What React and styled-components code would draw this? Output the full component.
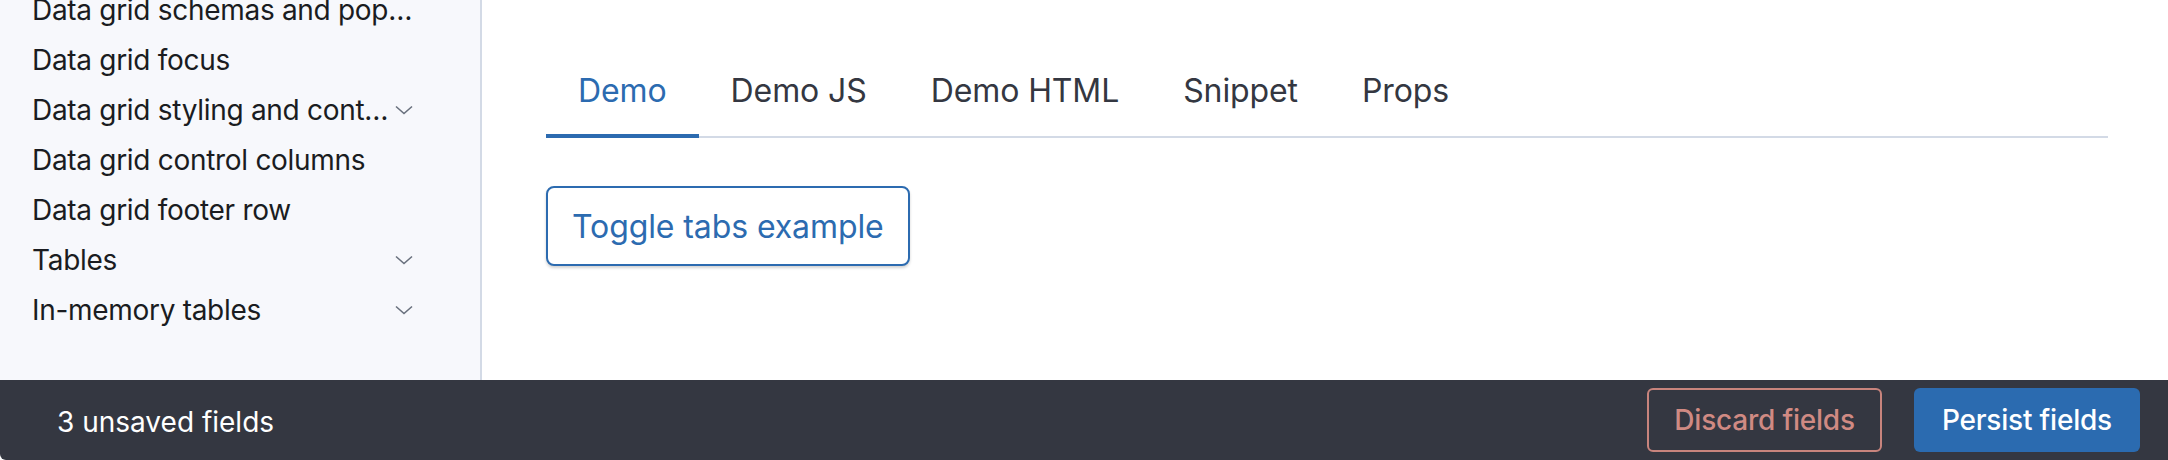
import React from "react";
import styled, { createGlobalStyle } from "styled-components";

const Global = createGlobalStyle`
  html, body { margin: 0; padding: 0; background: #ffffff; }
  body { font-family: Inter, "Noto Sans", sans-serif; -webkit-font-smoothing: antialiased; }
  * { box-sizing: border-box; }
`;

const Page = styled.div`
  width: 2168px;
  height: 460px;
  display: flex;
  flex-direction: column;
  overflow: hidden;
`;

const Body = styled.div`
  flex: 1;
  display: flex;
  min-height: 0;
`;

const Sidebar = styled.nav`
  width: 482px;
  flex: none;
  background: #f7f8fc;
  border-right: 2px solid #d3dae6;
  padding-left: 32px;
  overflow: hidden;
`;

const NavList = styled.ul`
  list-style: none;
  margin: -15px 0 0 0;
  padding: 0;
  width: 382px;
`;

const NavItem = styled.li`
  height: 50px;
  display: flex;
  align-items: center;
  gap: 3px;
  font-size: 28px;
  letter-spacing: -0.3px;
  color: #1a1c21;
`;

const NavLabel = styled.span`
  flex: 1;
  min-width: 0;
  white-space: nowrap;
  overflow: hidden;
  text-overflow: ellipsis;
`;

const Chevron = styled.svg`
  flex: none;
  width: 18px;
  height: 10px;
  margin-right: 1px;
`;

const Main = styled.main`
  flex: 1;
  padding: 45px 60px 0 64px;
`;

const TabList = styled.div`
  display: flex;
  border-bottom: 2px solid #d3dae6;
`;

const Tab = styled.button`
  position: relative;
  height: 91px;
  padding: 0 32px;
  border: none;
  background: none;
  font-family: Inter, sans-serif;
  font-size: 32px;
  letter-spacing: -0.1px;
  color: ${(p) => (p.$active ? "#2c6bb0" : "#343741")};
  cursor: pointer;
  &::after {
    content: "";
    position: absolute;
    left: 0;
    right: 0;
    bottom: -2px;
    height: 4px;
    background: ${(p) => (p.$active ? "#2c6bb0" : "transparent")};
  }
`;

const ToggleButton = styled.button`
  margin-top: 48px;
  height: 80px;
  padding: 0 24px;
  border: 2px solid #2c6bb0;
  border-radius: 8px;
  background: #ffffff;
  color: #2c6bb0;
  font-family: Inter, sans-serif;
  font-size: 32px;
  letter-spacing: -0.1px;
  box-shadow: 0 2px 3px rgba(0, 0, 0, 0.18);
`;

const Footer = styled.footer`
  height: 80px;
  flex: none;
  background: #343741;
  display: flex;
  align-items: center;
  justify-content: space-between;
  padding: 0 28px 0 57px;
  border-bottom-left-radius: 6px;
`;

const FooterText = styled.span`
  color: #ffffff;
  font-size: 28px;
  padding-top: 4px;
`;

const Actions = styled.div`
  display: flex;
  gap: 32px;
`;

const FooterButton = styled.button`
  height: 64px;
  padding: 0 ${(p) => (p.$primary ? "28px" : "25px")};
  border-radius: 6px;
  border: ${(p) => (p.$primary ? "none" : "2px solid #c8847d")};
  background: ${(p) => (p.$primary ? "#2b6bb0" : "transparent")};
  color: ${(p) => (p.$primary ? "#ffffff" : "#d08a83")};
  font-family: Inter, sans-serif;
  font-size: 28px;
  font-weight: 500;
  letter-spacing: -0.2px;
`;

const ChevronIcon = () => (
  <Chevron viewBox="0 0 18 10">
    <path d="M1 1.5 L9 8.5 L17 1.5" fill="none" stroke="#69707d" strokeWidth="1.6" />
  </Chevron>
);

const navItems = [
  { label: "Data grid schemas and popovers", chevron: false },
  { label: "Data grid focus", chevron: false },
  { label: "Data grid styling and control", chevron: true },
  { label: "Data grid control columns", chevron: false },
  { label: "Data grid footer row", chevron: false },
  { label: "Tables", chevron: true },
  { label: "In-memory tables", chevron: true },
];

const tabs = ["Demo", "Demo JS", "Demo HTML", "Snippet", "Props"];

export default function App() {
  return (
    <>
      <Global />
      <Page>
        <Body>
          <Sidebar>
            <NavList>
              {navItems.map((it) => (
                <NavItem key={it.label}>
                  <NavLabel>{it.label}</NavLabel>
                  {it.chevron && <ChevronIcon />}
                </NavItem>
              ))}
            </NavList>
          </Sidebar>
          <Main>
            <TabList>
              {tabs.map((t, i) => (
                <Tab key={t} $active={i === 0}>
                  {t}
                </Tab>
              ))}
            </TabList>
            <ToggleButton>Toggle tabs example</ToggleButton>
          </Main>
        </Body>
        <Footer>
          <FooterText>3 unsaved fields</FooterText>
          <Actions>
            <FooterButton>Discard fields</FooterButton>
            <FooterButton $primary>Persist fields</FooterButton>
          </Actions>
        </Footer>
      </Page>
    </>
  );
}
